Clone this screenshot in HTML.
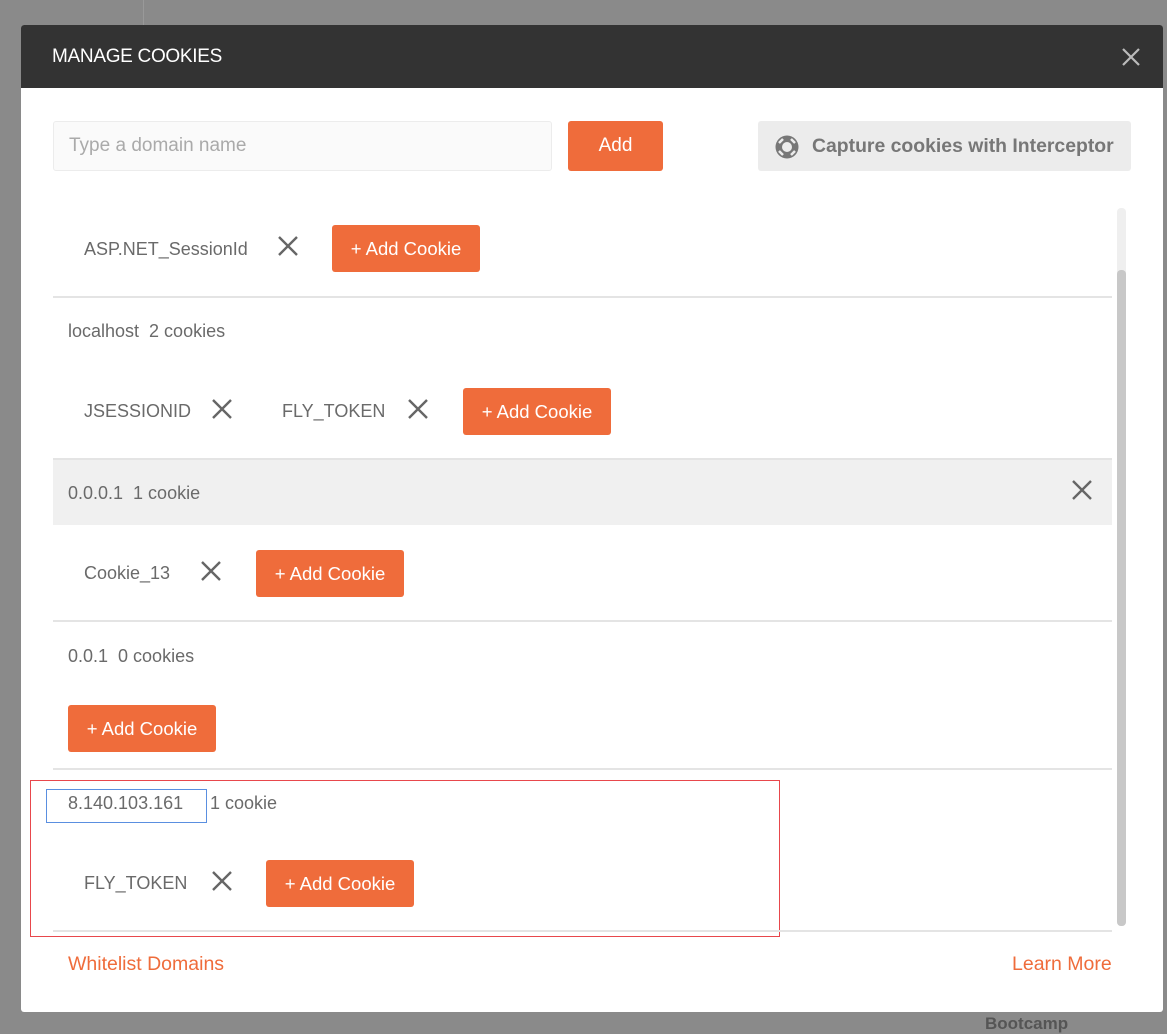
<!DOCTYPE html>
<html><head><meta charset="utf-8"><style>
*{margin:0;padding:0;box-sizing:border-box}
body{width:1167px;height:1024px;background:#8a8a8a;position:relative;overflow:hidden;font-family:"Liberation Sans",sans-serif;}
.a{position:absolute}
.modal{left:21px;top:25px;width:1142px;height:987px;background:#fff;border-radius:3px;overflow:hidden}
.hdr{left:21px;top:25px;width:1142px;height:63px;background:#333;border-radius:3px 3px 0 0}
.t{position:absolute;font-size:18px;color:#6a6a6a;white-space:nowrap;line-height:20px}
.btn{position:absolute;background:#ef6c3b;color:#fff;font-size:18.5px;border-radius:3px;text-align:center;line-height:47px;height:47px;width:148px}
.x{position:absolute;width:22px;height:22px}
.sep{position:absolute;left:53px;width:1059px;height:2px;background:#e4e4e4}
</style></head><body>
<div class="a" style="left:143px;top:0;width:1px;height:25px;background:#999"></div>
<div class="a modal"></div>
<div class="a hdr"></div>
<div class="t" style="left:52px;top:47px;color:#fff;font-size:19px;letter-spacing:-0.3px">MANAGE COOKIES</div>
<svg class="a" style="left:1121px;top:47px" width="20" height="20"><path d="M2 2L18 18M18 2L2 18" stroke="#bbb" stroke-width="2.2"/></svg>

<div class="a" style="left:53px;top:121px;width:499px;height:50px;background:#fafafa;border:1px solid #ececec;border-radius:3px"></div>
<div class="t" style="left:69px;top:136px;color:#aaa;font-size:19px">Type a domain name</div>
<div class="btn" style="left:568px;top:121px;width:95px;height:50px;line-height:50px;font-size:19px">Add</div>
<div class="a" style="left:758px;top:121px;width:373px;height:50px;background:#ececec;border-radius:3px"></div>
<svg class="a" style="left:774px;top:134px" width="26" height="26" viewBox="0 0 26 26"><circle cx="13" cy="13" r="11.5" fill="#777"/><circle cx="13" cy="13" r="5" fill="#ececec"/><path d="M5 9L9 5M17 5L21 9M21 17L17 21M9 21L5 17" stroke="#ececec" stroke-width="2.5"/></svg>
<div class="t" style="left:812px;top:136px;color:#777;font-size:19.4px;font-weight:bold">Capture cookies with Interceptor</div>

<div class="a" style="left:1117px;top:208px;width:9px;height:718px;background:#efefef;border-radius:4px"></div>
<div class="a" style="left:1117px;top:270px;width:9px;height:656px;background:#c8c8c8;border-radius:4px"></div>

<div class="t" style="left:84px;top:239px">ASP.NET_SessionId</div>
<svg class="x" style="left:277px;top:235px"><path d="M2 2L20 20M20 2L2 20" stroke="#666" stroke-width="2.4"/></svg>
<div class="btn" style="left:332px;top:225px">+ Add Cookie</div>
<div class="sep" style="top:296px"></div>

<div class="t" style="left:68px;top:321px">localhost &nbsp;2 cookies</div>
<div class="t" style="left:84px;top:401px">JSESSIONID</div>
<svg class="x" style="left:211px;top:398px"><path d="M2 2L20 20M20 2L2 20" stroke="#666" stroke-width="2.4"/></svg>
<div class="t" style="left:282px;top:401px">FLY_TOKEN</div>
<svg class="x" style="left:407px;top:398px"><path d="M2 2L20 20M20 2L2 20" stroke="#666" stroke-width="2.4"/></svg>
<div class="btn" style="left:463px;top:388px">+ Add Cookie</div>
<div class="sep" style="top:458px"></div>

<div class="a" style="left:53px;top:460px;width:1059px;height:65px;background:#f0f0f0"></div>
<div class="t" style="left:68px;top:483px">0.0.0.1 &nbsp;1 cookie</div>
<svg class="x" style="left:1071px;top:479px"><path d="M2 2L20 20M20 2L2 20" stroke="#666" stroke-width="2.4"/></svg>
<div class="t" style="left:84px;top:563px">Cookie_13</div>
<svg class="x" style="left:200px;top:560px"><path d="M2 2L20 20M20 2L2 20" stroke="#666" stroke-width="2.4"/></svg>
<div class="btn" style="left:256px;top:550px">+ Add Cookie</div>
<div class="sep" style="top:620px"></div>

<div class="t" style="left:68px;top:646px">0.0.1 &nbsp;0 cookies</div>
<div class="btn" style="left:68px;top:705px">+ Add Cookie</div>
<div class="sep" style="top:768px"></div>

<div class="a" style="left:30px;top:780px;width:750px;height:157px;border:1px solid #e8474c"></div>
<div class="a" style="left:46px;top:789px;width:161px;height:34px;border:1px solid #5a8fe0"></div>
<div class="t" style="left:68px;top:793px">8.140.103.161</div>
<div class="t" style="left:210px;top:793px">1 cookie</div>
<div class="t" style="left:84px;top:873px">FLY_TOKEN</div>
<svg class="x" style="left:211px;top:870px"><path d="M2 2L20 20M20 2L2 20" stroke="#666" stroke-width="2.4"/></svg>
<div class="btn" style="left:266px;top:860px">+ Add Cookie</div>
<div class="sep" style="top:930px"></div>

<div class="t" style="left:68px;top:954px;color:#ef6c3b;font-size:19.5px">Whitelist Domains</div>
<div class="t" style="left:1012px;top:954px;color:#ef6c3b;font-size:19.5px">Learn More</div>
<div class="t" style="left:985px;top:1014px;color:#555;font-size:17px;font-weight:bold">Bootcamp</div>
</body></html>
